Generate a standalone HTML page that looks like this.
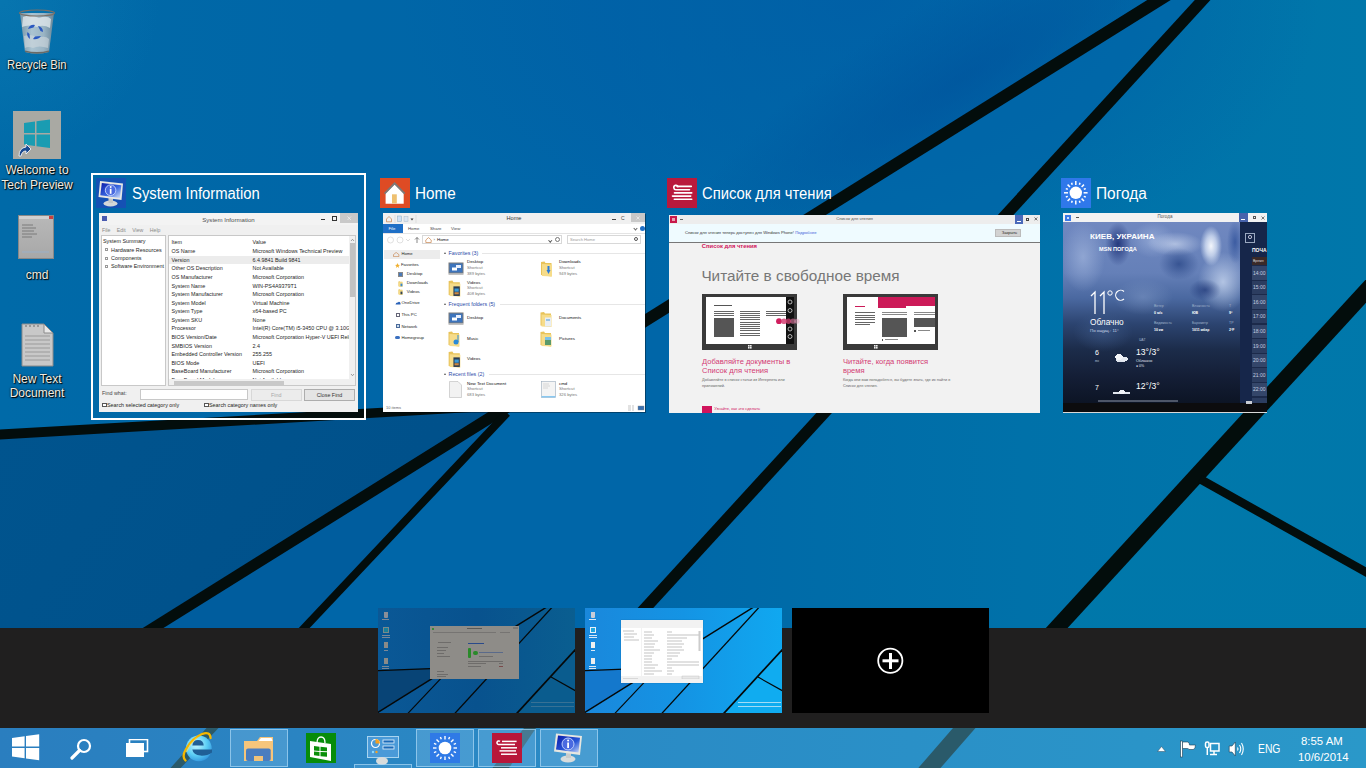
<!DOCTYPE html>
<html><head><meta charset="utf-8">
<style>
*{margin:0;padding:0;box-sizing:border-box}
html,body{width:1366px;height:768px;overflow:hidden;background:#0064a8;font-family:"Liberation Sans",sans-serif}
.abs{position:absolute}
#bg{position:absolute;left:0;top:0}
.ttl{position:absolute;color:#fff;font-size:17px;line-height:20px;white-space:nowrap}
.thumb{position:absolute;background:#fff;overflow:hidden}
#band{position:absolute;left:0;top:628px;width:1366px;height:100px;background:#201f1f}
#taskbar{position:absolute;left:0;top:728px;width:1366px;height:40px;overflow:hidden}
</style></head><body>
<svg id="bg" width="1366" height="768" viewBox="0 0 1366 768">
<defs>
<linearGradient id="g1" x1="0" y1="0" x2="1366" y2="0" gradientUnits="userSpaceOnUse">
<stop offset="0" stop-color="#006aa8"/><stop offset="0.25" stop-color="#0066a7"/><stop offset="0.45" stop-color="#0066a8"/><stop offset="0.6" stop-color="#006ca8"/><stop offset="0.75" stop-color="#0071a9"/><stop offset="1" stop-color="#0077aa"/>
</linearGradient>
<radialGradient id="gtl" cx="0" cy="0" r="160" gradientUnits="userSpaceOnUse"><stop offset="0" stop-color="#1890c0" stop-opacity=".3"/><stop offset="1" stop-color="#1890c0" stop-opacity="0"/></radialGradient>
<linearGradient id="g3" x1="0" y1="430" x2="400" y2="700" gradientUnits="userSpaceOnUse">
<stop offset="0" stop-color="#00548e"/><stop offset="1" stop-color="#00508a"/>
</linearGradient>
<linearGradient id="g6" x1="1200" y1="300" x2="1366" y2="700" gradientUnits="userSpaceOnUse">
<stop offset="0" stop-color="#0078ab"/><stop offset="1" stop-color="#0077a9"/>
</linearGradient>
<clipPath id="cr1"><polygon points="0,0 1160,0 509,405 0,435"/></clipPath><radialGradient id="gdk2"><stop offset="0" stop-color="#005ca6" stop-opacity=".75"/><stop offset=".6" stop-color="#005ca6" stop-opacity=".4"/><stop offset="1" stop-color="#005ca6" stop-opacity="0"/></radialGradient><radialGradient id="gdk"><stop offset="0" stop-color="#00509a" stop-opacity=".6"/><stop offset="1" stop-color="#00509a" stop-opacity="0"/></radialGradient>
</defs>
<rect width="1366" height="768" fill="url(#g1)"/><rect width="400" height="400" fill="url(#gtl)"/><ellipse cx="860" cy="0" rx="460" ry="270" fill="url(#gdk2)"/><g clip-path="url(#cr1)"><ellipse cx="960" cy="80" rx="330" ry="85" fill="url(#gdk)" transform="rotate(-32 960 80)"/></g>
<polygon points="1159,0 1202.6,0 499,768 -71,768" fill="#0066a9" opacity=".6"/>
<!-- R3 below D left of A -->
<polygon points="0,434.5 509,405 -71,768 0,768" fill="url(#g3)"/>
<!-- R4a between A and C -->
<polygon points="505,410 -71,768 173,768" fill="#005d9e"/>
<!-- R6/R7 right of E -->
<polygon points="1374,282 1366,282 1366,768 928,768" fill="url(#g6)"/>
<g fill="#030d0c">
<polygon points="1187.7,-25.3 -109.1,785.5 -103.5,794.5 1194.3,-14.7"/>
<polygon points="1216.7,-23.9 474.4,786.1 482.9,793.9 1225.2,-16.1"/>
<polygon points="504.1,410.3 148.5,787.3 154.3,792.7 509.9,415.7"/>
<polygon points="-9.7,440.1 512.3,409.5 511.7,400.5 -10.3,430.1"/>
<polygon points="1397.7,244.6 902.2,784.6 914.0,795.4 1409.5,255.4"/>
<polygon points="1197.9,482.7 1377.9,583.7 1382.1,576.3 1202.1,475.3"/>
</g>
</svg>


<!-- desktop icons -->
<svg class="abs" style="left:17px;top:8px" width="40" height="48">
<defs><linearGradient id="binb" x1="0" y1="0" x2="1" y2="0"><stop offset="0" stop-color="#8c9ca6"/><stop offset=".35" stop-color="#c8d2d8"/><stop offset=".7" stop-color="#b4c0c8"/><stop offset="1" stop-color="#7a8a94"/></linearGradient></defs>
<path d="M3 5 L37 5 L32 44 Q20 47 8 44 Z" fill="url(#binb)" opacity=".85"/>
<path d="M6 9 Q14 6 22 10 Q30 7 34 11 L33 20 Q26 16 20 19 Q12 16 5 19 Z" fill="#dfe6ea" opacity=".8"/>
<path d="M7 28 Q15 25 21 30 Q28 27 32 31 L31 40 Q22 37 16 40 Q11 38 8 40 Z" fill="#d0d8de" opacity=".6"/>
<ellipse cx="20" cy="5" rx="17.5" ry="3" fill="none" stroke="#7a7068" stroke-width="1.2"/>
<path d="M8 44 Q20 47.5 32 44 L32 42.5 Q20 45.5 8 42.5 Z" fill="#6a6a66"/>
<path d="M11 21 Q13 16 18 17 L16.5 19.5 Z M21 18 Q26 19 26 24 L23.5 23 Z M24 28 Q21 32 16 31 L18 28.5 Z M13 31 Q9 28 10.5 24 L12.5 26 Z" fill="#2a58c0"/>
</svg>
<div class="abs" style="left:7px;top:58px;font-size:12px;line-height:14px;color:#f2ede2;text-shadow:1px 1px 1px #000,0 0 2px #000;white-space:nowrap;transform:scaleX(.94);transform-origin:left">Recycle Bin</div>
<div class="abs" style="left:13px;top:111px;width:48px;height:48px;background:#a9a9a3"></div>
<svg class="abs" style="left:13px;top:111px" width="48" height="48"><g fill="#1a9cb2"><polygon points="11,12 22,10.5 22,22 11,22"/><polygon points="23.5,10.3 37,8.5 37,22 23.5,22"/><polygon points="11,23.5 22,23.5 22,35 11,33.5"/><polygon points="23.5,23.5 37,23.5 37,37 23.5,35.2"/></g><rect x="0" y="34" width="12" height="12" fill="#f0f0f0" opacity=".0"/><path d="M6 45 Q6 37 13 36 L13 33 L18 38 L13 43 L13 40 Q9 40 8 45 Z" fill="#1a4a90" stroke="#fff" stroke-width=".8"/></svg>
<div class="abs" style="left:0;top:163px;width:74px;text-align:center;font-size:12px;line-height:14.5px;color:#f2ede2;text-shadow:1px 1px 1px #000,0 0 2px #000;white-space:nowrap">Welcome to<br>Tech Preview</div>
<div class="abs" style="left:18px;top:215px;width:36px;height:44px;background:linear-gradient(#b8b8b8,#a8a8a8);border:1px solid #888"></div>
<div class="abs" style="left:19px;top:216px;width:34px;height:3px;background:#d0d0d0"></div>
<div class="abs" style="left:49px;top:216px;width:4px;height:3px;background:#c84040"></div>
<svg class="abs" style="left:21px;top:222px" width="30" height="35"><g stroke="#7a7a7a" stroke-width="1"><line x1="1" y1="3" x2="12" y2="3"/><line x1="1" y1="6" x2="15" y2="6"/><line x1="1" y1="9" x2="13" y2="9"/><line x1="1" y1="12" x2="16" y2="12"/><line x1="1" y1="15" x2="11" y2="15"/><line x1="1" y1="30" x2="28" y2="30" stroke="#9ab0c8"/></g></svg>
<div class="abs" style="left:0;top:267.5px;width:74px;text-align:center;font-size:12px;line-height:14px;color:#f2ede2;text-shadow:1px 1px 1px #000,0 0 2px #000">cmd</div>
<svg class="abs" style="left:20px;top:322px" width="35" height="46"><path d="M2 2 L24 2 L33 11 L33 44 L2 44 Z" fill="#c8c8c8" stroke="#8a8a8a" stroke-width="1"/><path d="M24 2 L24 11 L33 11 Z" fill="#e8e8e8" stroke="#8a8a8a" stroke-width="1"/><g stroke="#9a9a9a" stroke-width="1"><line x1="5" y1="14" x2="30" y2="14"/><line x1="5" y1="18" x2="30" y2="18"/><line x1="5" y1="22" x2="30" y2="22"/><line x1="5" y1="26" x2="30" y2="26"/><line x1="5" y1="30" x2="30" y2="30"/><line x1="5" y1="34" x2="30" y2="34"/><line x1="5" y1="38" x2="30" y2="38"/></g><g fill="#8a8a8a"><circle cx="6" cy="4" r="1"/><circle cx="10" cy="4" r="1"/><circle cx="14" cy="4" r="1"/><circle cx="18" cy="4" r="1"/></g></svg>
<div class="abs" style="left:0;top:371.5px;width:74px;text-align:center;font-size:12px;line-height:14.5px;color:#f2ede2;text-shadow:1px 1px 1px #000,0 0 2px #000">New Text<br>Document</div>

<!-- selection frame -->
<div class="abs" style="left:91px;top:173px;width:275px;height:247px;border:2px solid #fff"></div>

<!-- Titles -->
<div class="abs" style="left:96px;top:178px;width:30px;height:30px;background:#1551b4"></div>
<svg class="abs" style="left:96px;top:178px" width="30" height="30">
<defs><linearGradient id="scr2" x1="0" y1="0" x2="1" y2="1"><stop offset="0" stop-color="#0a1aa8"/><stop offset=".55" stop-color="#3a68e0"/><stop offset="1" stop-color="#d8e4fa"/></linearGradient></defs>
<ellipse cx="14.5" cy="25.5" rx="7" ry="3" fill="#d4d8d8"/><rect x="12.5" y="20" width="4.5" height="5" fill="#c4c8c8"/>
<polygon points="4,3 27,5.5 25.5,22 2.5,19" fill="#e8e8e4"/><polygon points="5.8,5 25.3,7.2 24,20 4.3,17.3" fill="url(#scr2)"/>
<circle cx="14.6" cy="12.2" r="5.3" fill="#4a6ae0" stroke="#c8d8ff" stroke-width=".9"/><rect x="13.8" y="10.8" width="1.7" height="5" fill="#fff"/><circle cx="14.7" cy="9" r=".95" fill="#fff"/>
</svg>
<div class="ttl" style="left:131.5px;top:183.5px;font-size:16px;transform:scaleX(.927);transform-origin:left">System Information</div>
<div class="abs" style="left:380px;top:178px;width:30px;height:30px;background:#de4b24"></div>
<svg class="abs" style="left:380px;top:178px" width="30" height="30"><polygon points="5.6,15.3 14.6,6.3 23.7,15.3 23.7,25.7 5.6,25.7" fill="#fff"/><path d="M4.6 15.6 L14.6 5.4 L24.7 15.6" stroke="#7a7a7a" stroke-width="1.8" fill="none"/><rect x="12" y="16.3" width="4.8" height="9.2" fill="#eec070"/></svg>
<div class="ttl" style="left:415px;top:183.5px;font-size:16px;transform:scaleX(.955);transform-origin:left">Home</div>
<div class="abs" style="left:667px;top:178px;width:30px;height:30px;background:#b9193c"></div>
<svg class="abs" style="left:667px;top:178px" width="30" height="30"><g stroke="#fff" stroke-width="1.6" fill="none" stroke-linecap="round"><path d="M11 8.6 A2.2 2.2 0 1 0 9 11.7 L22.5 11.7"/><line x1="10" y1="8.4" x2="24.3" y2="8.4"/><line x1="7.5" y1="14.9" x2="24.7" y2="14.9"/><line x1="5.5" y1="18.1" x2="23.7" y2="18.1"/><line x1="7.3" y1="21.2" x2="24.7" y2="21.2"/></g></svg>
<div class="ttl" style="left:701.7px;top:183.5px;font-size:16px;transform:scaleX(.925);transform-origin:left">Список для чтения</div>
<div class="abs" style="left:1061px;top:178px;width:30px;height:30px;background:#2f78ea"></div>
<svg class="abs" style="left:1061px;top:178px" width="30" height="30"><circle cx="14.8" cy="14.8" r="6.2" fill="#fff"/><g stroke="#fff" stroke-width="1.5"><line x1="14.8" y1="3" x2="14.8" y2="7"/><line x1="14.8" y1="22.6" x2="14.8" y2="26.6"/><line x1="3" y1="14.8" x2="7" y2="14.8"/><line x1="22.6" y1="14.8" x2="26.6" y2="14.8"/><line x1="6.6" y1="6.6" x2="9" y2="9"/><line x1="20.6" y1="20.6" x2="23" y2="23"/><line x1="23" y1="6.6" x2="20.6" y2="9"/><line x1="6.6" y1="23" x2="9" y2="20.6"/><line x1="10.6" y1="4.8" x2="11.2" y2="6.8"/><line x1="19" y1="4.8" x2="18.4" y2="6.8"/><line x1="10.6" y1="24.8" x2="11.2" y2="22.8"/><line x1="19" y1="24.8" x2="18.4" y2="22.8"/><line x1="4.8" y1="10.6" x2="6.8" y2="11.2"/><line x1="4.8" y1="19" x2="6.8" y2="18.4"/><line x1="24.8" y1="10.6" x2="22.8" y2="11.2"/><line x1="24.8" y1="19" x2="22.8" y2="18.4"/></g></svg>
<div class="ttl" style="left:1095.9px;top:183.5px;font-size:16px;transform:scaleX(.964);transform-origin:left">Погода</div>

<!-- thumbnails -->
<div class="thumb" id="t1" style="left:99px;top:213px;width:259px;height:199px;background:#f0f0f0">
<style>#t1 .s{position:absolute;font-size:5.4px;line-height:7px;color:#262626;white-space:nowrap}</style>
<div class="abs" style="left:0;top:0;width:259px;height:12px;background:#f3f3f3"></div>
<div class="abs" style="left:3px;top:3px;width:5px;height:5px;background:#4a5ab0"></div>
<div class="abs" style="left:0;top:2.5px;width:259px;text-align:center;font-size:6.1px;line-height:7px;color:#505050">System Information</div>
<div class="abs" style="left:222px;top:6px;width:4px;height:1.2px;background:#333"></div>
<div class="abs" style="left:233px;top:3px;width:5px;height:4.5px;border:1px solid #333;border-top-width:1.5px"></div>
<div class="abs" style="left:241px;top:0;width:18px;height:10px;background:#c9c9c9"></div>
<svg class="abs" style="left:248px;top:2.5px" width="4.5" height="4.5"><path d="M0.5 0.5 L4.0 4.0 M4.0 0.5 L0.5 4.0" stroke="#f4f4f4" stroke-width="0.7"/></svg>
<div class="abs" style="left:3px;top:14px;font-size:5.2px;line-height:7px;color:#8a8a8a;white-space:nowrap;word-spacing:5px">File Edit View Help</div>
<div class="abs" style="left:1.5px;top:22.4px;width:65.5px;height:151px;background:#fff;border:1px solid #c8c8c8">
<div class="s" style="left:1.5px;top:2px">System Summary</div>
<div class="abs" style="left:3.5px;top:12px;width:3px;height:3px;border:.5px solid #999"></div><div class="s" style="left:9.5px;top:10.2px">Hardware Resources</div>
<div class="abs" style="left:3.5px;top:20.2px;width:3px;height:3px;border:.5px solid #999"></div><div class="s" style="left:9.5px;top:18.4px">Components</div>
<div class="abs" style="left:3.5px;top:28.4px;width:3px;height:3px;border:.5px solid #999"></div><div class="s" style="left:9.5px;top:26.6px">Software Environment</div>
</div>
<div class="abs" style="left:68.5px;top:22.4px;width:188px;height:151px;background:#fff;border:1px solid #c8c8c8;overflow:hidden">
<div class="abs" style="left:0;top:19.5px;width:181px;height:8.5px;background:#ececec"></div>
<div class="s" style="left:3px;top:2.5px">Item</div><div class="s" style="left:84px;top:2.5px">Value</div>
<div class="s" style="left:3px;top:11.9px">OS Name</div><div class="s" style="left:84px;top:11.9px">Microsoft Windows Technical Preview</div>
<div class="s" style="left:3px;top:20.5px">Version</div><div class="s" style="left:84px;top:20.5px">6.4.9841 Build 9841</div>
<div class="s" style="left:3px;top:29.1px">Other OS Description</div><div class="s" style="left:84px;top:29.1px">Not Available</div>
<div class="s" style="left:3px;top:37.6px">OS Manufacturer</div><div class="s" style="left:84px;top:37.6px">Microsoft Corporation</div>
<div class="s" style="left:3px;top:46.2px">System Name</div><div class="s" style="left:84px;top:46.2px">WIN-PS4A9379T1</div>
<div class="s" style="left:3px;top:54.8px">System Manufacturer</div><div class="s" style="left:84px;top:54.8px">Microsoft Corporation</div>
<div class="s" style="left:3px;top:63.4px">System Model</div><div class="s" style="left:84px;top:63.4px">Virtual Machine</div>
<div class="s" style="left:3px;top:72.0px">System Type</div><div class="s" style="left:84px;top:72.0px">x64-based PC</div>
<div class="s" style="left:3px;top:80.5px">System SKU</div><div class="s" style="left:84px;top:80.5px">None</div>
<div class="s" style="left:3px;top:89.1px">Processor</div><div class="s" style="left:84px;top:89.1px">Intel(R) Core(TM) i5-3450 CPU @ 3.10GHz</div>
<div class="s" style="left:3px;top:97.7px">BIOS Version/Date</div><div class="s" style="left:84px;top:97.7px">Microsoft Corporation Hyper-V UEFI Release</div>
<div class="s" style="left:3px;top:106.3px">SMBIOS Version</div><div class="s" style="left:84px;top:106.3px">2.4</div>
<div class="s" style="left:3px;top:114.9px">Embedded Controller Version</div><div class="s" style="left:84px;top:114.9px">255.255</div>
<div class="s" style="left:3px;top:123.4px">BIOS Mode</div><div class="s" style="left:84px;top:123.4px">UEFI</div>
<div class="s" style="left:3px;top:132.0px">BaseBoard Manufacturer</div><div class="s" style="left:84px;top:132.0px">Microsoft Corporation</div>
<div class="s" style="left:3px;top:140.6px">BaseBoard Model</div><div class="s" style="left:84px;top:140.6px">Not Available</div>

<div class="abs" style="left:180.5px;top:0;width:6.5px;height:143px;background:#f0f0f0"></div>
<div class="abs" style="left:181.5px;top:7px;width:4.5px;height:54px;background:#c2c2c2"></div><svg class="abs" style="left:181.5px;top:1.5px" width="5" height="4"><path d="M1 3 L2.5 1.3 L4 3" stroke="#666" stroke-width=".6" fill="none"/></svg><svg class="abs" style="left:181.5px;top:137px" width="5" height="4"><path d="M1 1 L2.5 2.7 L4 1" stroke="#666" stroke-width=".6" fill="none"/></svg>
<div class="abs" style="left:0;top:143px;width:187px;height:7px;background:#f0f0f0"></div>
<div class="abs" style="left:5px;top:144.5px;width:110px;height:4px;background:#c8c8c8"></div>
</div>
<div class="abs" style="left:3px;top:177px;font-size:5.35px;line-height:7px;color:#444;white-space:nowrap">Find what:</div>
<div class="abs" style="left:41px;top:175.5px;width:108px;height:11px;background:#fff;border:1px solid #c8c8c8"></div>
<div class="abs" style="left:152px;top:175.5px;width:50.5px;height:12px;background:#ececec;border:1px solid #d8d8d8;text-align:center;font-size:5.35px;line-height:10px;color:#a8a8a8">Find</div>
<div class="abs" style="left:205px;top:175.5px;width:51px;height:12px;background:#e4e4e4;border:1px solid #adadad;text-align:center;font-size:5.35px;line-height:10px;color:#333">Close Find</div>
<div class="abs" style="left:3px;top:189.5px;width:4.5px;height:4.5px;border:.8px solid #555;background:#fff"></div>
<div class="s" style="left:8px;top:189px">Search selected category only</div>
<div class="abs" style="left:105px;top:189.5px;width:4.5px;height:4.5px;border:.8px solid #555;background:#fff"></div>
<div class="s" style="left:110px;top:189px">Search category names only</div>
</div>
<div class="thumb" id="t2" style="left:383px;top:213px;width:262px;height:199px;box-shadow:1px 1px 0 rgba(0,0,0,.35)"><style>#t2 .e{position:absolute;line-height:6px;white-space:nowrap}</style><div class="abs" style="left:0;top:0;width:262px;height:11px;background:#f0f0f0"></div>
<svg class="abs" style="left:2px;top:2px" width="36" height="8"><path d="M1.5 4 L4 1.5 L6.5 4 L6.5 6.8 L1.5 6.8 Z" fill="none" stroke="#c07030" stroke-width=".6"/><line x1="10" y1="0" x2="10" y2="8" stroke="#ccc" stroke-width=".5"/><rect x="12.5" y="1" width="4" height="5.5" fill="#cfe0f5" stroke="#8ab" stroke-width=".5"/><rect x="19" y="1.5" width="4" height="5" fill="#dde6f0" stroke="#abc" stroke-width=".5"/><path d="M25.5 3.5 L28.5 3.5 L27 5.5 Z" fill="#333"/><line x1="31" y1="0" x2="31" y2="8" stroke="#ccc" stroke-width=".5"/></svg>
<div class="e" style="left:0;top:2.3px;width:262px;text-align:center;font-size:5.6px;color:#333">Home</div>
<div class="abs" style="left:229px;top:5.5px;width:4px;height:1px;background:#444"></div>
<div class="e" style="left:238px;top:2px;font-size:5px;color:#444">C</div>
<div class="abs" style="left:247.5px;top:0;width:14.5px;height:9px;background:#c8c8c8"></div>
<svg class="abs" style="left:253px;top:2.5px" width="4" height="4"><path d="M0.5 0.5 L3.5 3.5 M3.5 0.5 L0.5 3.5" stroke="#f4f4f4" stroke-width="0.7"/></svg>
<div class="abs" style="left:0;top:11px;width:262px;height:9.5px;background:#fff;border-bottom:.5px solid #e4e4e4"></div>
<div class="abs" style="left:0;top:11px;width:20px;height:9px;background:#1e6fc6"></div>
<div class="e" style="left:5.5px;top:12.5px;font-size:4.3px;color:#fff">File</div>
<div class="e" style="left:25px;top:12.8px;font-size:4.3px;color:#444;">Home</div>
<div class="e" style="left:47px;top:12.8px;font-size:4.3px;color:#444;">Share</div>
<div class="e" style="left:68px;top:12.8px;font-size:4.3px;color:#444;">View</div>
<div class="abs" style="left:251px;top:14px;width:3px;height:3px;border-right:.7px solid #666;border-bottom:.7px solid #666;transform:rotate(45deg)"></div>
<div class="abs" style="left:256.5px;top:13px;width:5px;height:5px;border-radius:50%;background:#1e6fc6"></div>
<svg class="abs" style="left:4px;top:23px" width="36" height="8"><circle cx="3.5" cy="4" r="3" fill="none" stroke="#ccc" stroke-width=".6"/><circle cx="13" cy="4" r="3" fill="none" stroke="#ccc" stroke-width=".6"/><path d="M19 3 L21 5 L23 3" stroke="#bbb" stroke-width=".5" fill="none"/><path d="M30 7 L30 1.5 M28 3.5 L30 1.5 L32 3.5" stroke="#555" stroke-width=".7" fill="none"/></svg>
<div class="abs" style="left:39px;top:22px;width:140px;height:9px;border:.6px solid #d8d8d8;background:#fff"></div>
<svg class="abs" style="left:41.5px;top:24px" width="8" height="6"><path d="M0.8 3 L3.5 0.6 L6.2 3 L6.2 5.5 L0.8 5.5 Z" fill="none" stroke="#c07030" stroke-width=".6"/></svg>
<div class="e" style="left:50.5px;top:23.6px;font-size:4.3px;color:#555;">›</div>
<div class="e" style="left:54px;top:23.6px;font-size:4.4px;color:#111;">Home</div>
<div class="abs" style="left:166px;top:25.5px;width:2.5px;height:2.5px;border-right:.6px solid #555;border-bottom:.6px solid #555;transform:rotate(45deg)"></div>
<div class="abs" style="left:172px;top:24px;width:5px;height:5px;border:.6px solid #777;border-radius:50%"></div>
<div class="abs" style="left:184px;top:22px;width:74px;height:9px;border:.6px solid #d8d8d8;background:#fff"></div>
<div class="e" style="left:187px;top:23.6px;font-size:4.1px;color:#9a9a9a;">Search Home</div>
<div class="abs" style="left:251px;top:24px;width:4px;height:4px;border:.6px solid #555;border-radius:50%"></div>
<div class="abs" style="left:1px;top:36.5px;width:56px;height:9.5px;background:#ececec"></div>
<svg class="abs" style="left:10px;top:38.5px" width="7" height="5"><path d="M0.5 2.6 L3.2 0.4 L5.9 2.6 L5.9 4.6 L0.5 4.6 Z" fill="none" stroke="#c07030" stroke-width=".55"/></svg>
<div class="e" style="left:18.5px;top:38.3px;font-size:4.2px;color:#222;">Home</div>
<svg class="abs" style="left:11.5px;top:50px" width="5" height="5"><polygon points="2.5,0 3.2,1.8 5,1.9 3.6,3 4.1,4.9 2.5,3.8 0.9,4.9 1.4,3 0,1.9 1.8,1.8" fill="#f0b030"/></svg>
<div class="e" style="left:18px;top:49.4px;font-size:4.3px;color:#1a1a1a;">Favorites</div>
<div class="abs" style="left:15px;top:59px;width:5px;height:4.5px;background:#4a7ab8;border:.5px solid #888"></div>
<div class="e" style="left:23.7px;top:58.2px;font-size:4.3px;color:#1a1a1a;">Desktop</div>
<svg class="abs" style="left:15px;top:67.5px" width="5" height="6" viewBox="0 0 12 16"><path d="M0.5 1 L4 0.5 L5 2 L11 2 L11 15.5 L0.5 14 Z" fill="#e8c35a"/><path d="M1.5 3 L11.5 3.5 L11.5 15.5 L1.5 15 Z" fill="#f6dc8a"/><rect x="6" y="7" width="5" height="7" fill="#3a8ad0"/></svg>
<div class="e" style="left:23.7px;top:67.0px;font-size:4.3px;color:#1a1a1a;">Downloads</div>
<svg class="abs" style="left:15px;top:76.3px" width="5" height="6" viewBox="0 0 12 16"><path d="M0.5 1 L4 0.5 L5 2 L11 2 L11 15.5 L0.5 14 Z" fill="#e8c35a"/><path d="M1.5 3 L11.5 3.5 L11.5 15.5 L1.5 15 Z" fill="#f6dc8a"/><rect x="6" y="7" width="5" height="7" fill="#345"/></svg>
<div class="e" style="left:23.7px;top:75.8px;font-size:4.3px;color:#1a1a1a;">Videos</div>
<svg class="abs" style="left:12px;top:88px" width="6" height="4"><path d="M0.5 3.5 Q1 1 3 1.5 Q4 0 5.5 2 L5.5 3.5 Z" fill="#2a62b8"/></svg>
<div class="e" style="left:18.5px;top:87.2px;font-size:4.3px;color:#1a1a1a;">OneDrive</div>
<div class="abs" style="left:12.5px;top:99.5px;width:4.5px;height:4px;border:.5px solid #667"></div>
<div class="e" style="left:18.5px;top:99.2px;font-size:4.3px;color:#1a1a1a;">This PC</div>
<div class="abs" style="left:12.5px;top:111px;width:4.5px;height:4px;border:.5px solid #4a6a9a;background:#cde"></div>
<div class="e" style="left:18.5px;top:110.6px;font-size:4.3px;color:#1a1a1a;">Network</div>
<div class="abs" style="left:12px;top:123px;width:5px;height:3px;border-radius:1.5px;background:#3a70c0"></div>
<div class="e" style="left:18.5px;top:122.3px;font-size:4.3px;color:#1a1a1a;">Homegroup</div>
<div class="abs" style="left:61px;top:39.0px;width:0;height:0;border-left:1.2px solid transparent;border-right:1.2px solid transparent;border-bottom:2px solid #555"></div><div class="e" style="left:65.6px;top:37.0px;font-size:5.3px;color:#2a4aa8;">Favorites (3)</div><div class="abs" style="left:98.8px;top:40.0px;width:162.8px;height:.6px;background:#e6e6e6"></div>
<svg class="abs" style="left:65px;top:48.5px" width="16" height="13"><rect x="0.5" y="0.5" width="15" height="11" fill="#7a7a7a"/><rect x="1.5" y="1.5" width="13" height="9" fill="#3d74bc"/><rect x="4" y="5.5" width="5" height="3" fill="#fff"/><rect x="8" y="3" width="5" height="3" fill="#e8f0ff"/><rect x="0.5" y="11.5" width="15" height="1.2" fill="#aaa"/></svg>
<div class="e" style="left:84px;top:46.3px;font-size:4.4px;color:#111;">Desktop</div>
<div class="e" style="left:84px;top:52.0px;font-size:4.2px;color:#777;">Shortcut</div>
<div class="e" style="left:84px;top:57.8px;font-size:4.2px;color:#777;">389 bytes</div>
<svg class="abs" style="left:157px;top:48px" width="13" height="16" viewBox="0 0 12 16"><path d="M0.5 1 L4 0.5 L5 2 L11 2 L11 15.5 L0.5 14 Z" fill="#e8c35a"/><path d="M1.5 3 L11.5 3.5 L11.5 15.5 L1.5 15 Z" fill="#f6dc8a"/><path d="M6 9 L10 9 L8 13 Z" fill="#2a7ad8"/><rect x="7" y="5" width="2" height="5" fill="#2a7ad8"/></svg>
<div class="e" style="left:176px;top:46.3px;font-size:4.4px;color:#111;">Downloads</div>
<div class="e" style="left:176px;top:52.0px;font-size:4.2px;color:#777;">Shortcut</div>
<div class="e" style="left:176px;top:57.8px;font-size:4.2px;color:#777;">949 bytes</div>
<svg class="abs" style="left:65px;top:67px" width="13" height="17" viewBox="0 0 12 16"><path d="M0.5 1 L4 0.5 L5 2 L11 2 L11 15.5 L0.5 14 Z" fill="#e8c35a"/><path d="M1.5 3 L11.5 3.5 L11.5 15.5 L1.5 15 Z" fill="#f6dc8a"/><rect x="5" y="6" width="6" height="9" fill="#2c3c50"/><rect x="6" y="8" width="4" height="3" fill="#3a9ad8"/><rect x="6" y="11.5" width="4" height="2" fill="#c84"/></svg>
<div class="e" style="left:84px;top:66.7px;font-size:4.4px;color:#111;">Videos</div>
<div class="e" style="left:84px;top:72.4px;font-size:4.2px;color:#777;">Shortcut</div>
<div class="e" style="left:84px;top:78.0px;font-size:4.2px;color:#777;">408 bytes</div>
<div class="abs" style="left:61px;top:89.6px;width:0;height:0;border-left:1.2px solid transparent;border-right:1.2px solid transparent;border-bottom:2px solid #555"></div><div class="e" style="left:65.6px;top:87.6px;font-size:5.3px;color:#2a4aa8;">Frequent folders (5)</div><div class="abs" style="left:116.6px;top:90.6px;width:145.0px;height:.6px;background:#e6e6e6"></div>
<svg class="abs" style="left:65px;top:99px" width="16" height="13"><rect x="0.5" y="0.5" width="15" height="11" fill="#7a7a7a"/><rect x="1.5" y="1.5" width="13" height="9" fill="#3d74bc"/><rect x="4" y="5.5" width="5" height="3" fill="#fff"/><rect x="8" y="3" width="5" height="3" fill="#e8f0ff"/><rect x="0.5" y="11.5" width="15" height="1.2" fill="#aaa"/></svg>
<div class="e" style="left:84px;top:102.4px;font-size:4.4px;color:#111;">Desktop</div>
<svg class="abs" style="left:157px;top:97.5px" width="12" height="17" viewBox="0 0 12 16"><path d="M0.5 1 L4 0.5 L5 2 L11 2 L11 15.5 L0.5 14 Z" fill="#e8c35a"/><path d="M1.5 3 L11.5 3.5 L11.5 15.5 L1.5 15 Z" fill="#f6dc8a"/><rect x="5" y="6" width="6" height="9" fill="#e8eef4"/><rect x="6" y="8" width="4" height="1" fill="#4a9ad8"/></svg>
<div class="e" style="left:176px;top:102.4px;font-size:4.4px;color:#111;">Documents</div>
<svg class="abs" style="left:65px;top:118px" width="12" height="16" viewBox="0 0 12 16"><path d="M0.5 1 L4 0.5 L5 2 L11 2 L11 15.5 L0.5 14 Z" fill="#e8c35a"/><path d="M1.5 3 L11.5 3.5 L11.5 15.5 L1.5 15 Z" fill="#f6dc8a"/><circle cx="8" cy="11" r="2.5" fill="#2a8ad8"/><rect x="9.5" y="4" width="1" height="7" fill="#2a8ad8"/></svg>
<div class="e" style="left:84px;top:122.8px;font-size:4.4px;color:#111;">Music</div>
<svg class="abs" style="left:157px;top:118px" width="12" height="16" viewBox="0 0 12 16"><path d="M0.5 1 L4 0.5 L5 2 L11 2 L11 15.5 L0.5 14 Z" fill="#e8c35a"/><path d="M1.5 3 L11.5 3.5 L11.5 15.5 L1.5 15 Z" fill="#f6dc8a"/><rect x="5" y="6" width="6" height="8" fill="#5a9a6a"/><rect x="5" y="6" width="6" height="3" fill="#7ac0e8"/></svg>
<div class="e" style="left:176px;top:122.8px;font-size:4.4px;color:#111;">Pictures</div>
<svg class="abs" style="left:65px;top:138px" width="13" height="17" viewBox="0 0 12 16"><path d="M0.5 1 L4 0.5 L5 2 L11 2 L11 15.5 L0.5 14 Z" fill="#e8c35a"/><path d="M1.5 3 L11.5 3.5 L11.5 15.5 L1.5 15 Z" fill="#f6dc8a"/><rect x="5" y="6" width="6" height="9" fill="#2c3c50"/><rect x="6" y="8" width="4" height="3" fill="#3a9ad8"/><rect x="6" y="11.5" width="4" height="2" fill="#c84"/></svg>
<div class="e" style="left:84px;top:143.0px;font-size:4.4px;color:#111;">Videos</div>
<div class="abs" style="left:61px;top:160.4px;width:0;height:0;border-left:1.2px solid transparent;border-right:1.2px solid transparent;border-bottom:2px solid #555"></div><div class="e" style="left:65.6px;top:158.4px;font-size:5.3px;color:#2a4aa8;">Recent files (2)</div><div class="abs" style="left:106.4px;top:161.4px;width:155.2px;height:.6px;background:#e6e6e6"></div>
<svg class="abs" style="left:66px;top:168px" width="13" height="17"><path d="M0.5 0.5 L9 0.5 L12.5 4 L12.5 16.5 L0.5 16.5 Z" fill="#f2f2f2" stroke="#bbb" stroke-width=".6"/></svg>
<div class="e" style="left:84px;top:167.6px;font-size:4.4px;color:#111;">New Text Document</div>
<div class="e" style="left:84px;top:173.2px;font-size:4.2px;color:#777;">Shortcut</div>
<div class="e" style="left:84px;top:179.0px;font-size:4.2px;color:#777;">683 bytes</div>
<svg class="abs" style="left:157.5px;top:167.5px" width="15" height="17"><rect x="0.5" y="0.5" width="14" height="16" fill="#f4f4f4" stroke="#9ab" stroke-width=".6"/><rect x="0.5" y="15" width="14" height="1.5" fill="#8ac8f0"/><g stroke="#bbb" stroke-width=".5"><line x1="2" y1="3" x2="8" y2="3"/><line x1="2" y1="5" x2="9" y2="5"/><line x1="2" y1="7" x2="7" y2="7"/></g></svg>
<div class="e" style="left:176px;top:167.6px;font-size:4.4px;color:#111;">cmd</div>
<div class="e" style="left:176px;top:173.2px;font-size:4.2px;color:#777;">Shortcut</div>
<div class="e" style="left:176px;top:179.0px;font-size:4.2px;color:#777;">326 bytes</div>
<div class="e" style="left:3px;top:191.7px;font-size:4px;color:#666;">10 items</div>
<svg class="abs" style="left:244px;top:192px" width="18" height="6"><g stroke="#888" stroke-width=".5"><line x1="1" y1="1" x2="4" y2="1"/><line x1="1" y1="3" x2="4" y2="3"/><line x1="1" y1="5" x2="4" y2="5"/><line x1="6" y1="0" x2="6" y2="6"/></g><rect x="11" y="1" width="6" height="4" fill="#3a70b0" stroke="#888" stroke-width=".4"/></svg></div>
<div class="thumb" id="t3" style="left:669px;top:215px;width:371px;height:198px;background:#f2f2f2"><style>#t3 .e{position:absolute;white-space:nowrap}</style><div class="abs" style="left:0px;top:0px;width:371.0px;height:8.5px;background:#ededed;"></div>
<div class="abs" style="left:1px;top:1.3px;width:6.5px;height:6.3px;background:#c8174a;"></div>
<div class="abs" style="left:2.5px;top:3px;width:3.5px;height:3.0px;background:#e8a0b0;"></div>
<div class="abs" style="left:11px;top:4px;width:3.0px;height:0.6px;background:#666;"></div>
<div class="e" style="left:0;top:1.3px;width:371px;text-align:center;font-size:4.2px;line-height:6px;color:#555">Список для чтения</div>
<div class="abs" style="left:345.8px;top:0px;width:8.2px;height:8.5px;background:#4a6aba;"></div>
<div class="abs" style="left:348px;top:5.5px;width:4.0px;height:0.7px;background:#fff;"></div>
<div class="abs" style="left:356.5px;top:2.5px;width:3.5px;height:3.5px;background:transparent;border:.7px solid #444"></div>
<svg class="abs" style="left:365px;top:2.3px" width="3.8" height="3.8"><path d="M0.5 0.5 L3.3 3.3 M3.3 0.5 L0.5 3.3" stroke="#333" stroke-width="0.7"/></svg>
<div class="abs" style="left:0px;top:8.5px;width:371.0px;height:0.5px;background:#a8c8e8;"></div>
<div class="abs" style="left:0px;top:9px;width:371.0px;height:17.7px;background:#effbff;"></div>
<div class="e" style="left:16px;top:14.8px;font-size:4.12px;color:#333;line-height:6px">Список для чтения теперь доступен для Windows Phone! <span style="color:#3a5ad8">Подробнее</span></div>
<div class="abs" style="left:326.3px;top:13.6px;width:26.0px;height:8.1px;background:#d2d2d2;border:.5px solid #bbb"></div>
<div class="e" style="left:328.5px;top:14.8px;font-size:4px;color:#222;line-height:6px;width:24px;text-align:center">Закрыть</div>
<div class="abs" style="left:0px;top:26.7px;width:371.0px;height:1.1px;background:#777;"></div>
<div class="e" style="left:32.8px;top:27.5px;font-size:5.85px;color:#d0145c;font-weight:bold;line-height:7px">Список для чтения</div>
<div class="e" style="left:32.4px;top:52px;font-size:15.3px;color:#777;line-height:18px">Читайте в свободное время</div>
<div class="abs" style="left:33px;top:78.8px;width:95.1px;height:56.2px;background:#3a3a3a;"></div>
<div class="abs" style="left:36.6px;top:82.4px;width:80.0px;height:46.2px;background:#fff;"></div>
<div class="abs" style="left:116.6px;top:82.4px;width:8.2px;height:46.2px;background:#111;"></div>
<svg class="abs" style="left:117px;top:82px" width="8" height="44"><g stroke="#ddd" stroke-width=".8" fill="none"><circle cx="4" cy="5" r="2"/><circle cx="4" cy="13.5" r="2"/><circle cx="4" cy="32" r="2"/><circle cx="4" cy="39.5" r="2"/></g></svg>
<div class="abs" style="left:45.2px;top:90px;width:17.4px;height:1.0px;background:#555;"></div>
<div class="abs" style="left:45.2px;top:95.5px;width:19.8px;height:1.0px;background:#666;"></div>
<div class="abs" style="left:45.2px;top:97.5px;width:19.8px;height:1.0px;background:#666;"></div>
<div class="abs" style="left:45.2px;top:99.5px;width:19.8px;height:1.0px;background:#666;"></div>
<div class="abs" style="left:45.2px;top:102.6px;width:19.8px;height:19.2px;background:#555;"></div>
<div class="abs" style="left:70.8px;top:95.5px;width:20.2px;height:1.0px;background:#666;"></div>
<div class="abs" style="left:70.8px;top:97.7px;width:20.2px;height:1.0px;background:#666;"></div>
<div class="abs" style="left:70.8px;top:99.9px;width:20.2px;height:1.0px;background:#666;"></div>
<div class="abs" style="left:70.8px;top:102.1px;width:20.2px;height:1.0px;background:#666;"></div>
<div class="abs" style="left:70.8px;top:104.3px;width:20.2px;height:1.0px;background:#666;"></div>
<div class="abs" style="left:70.8px;top:106.5px;width:20.2px;height:1.0px;background:#666;"></div>
<div class="abs" style="left:70.8px;top:108.7px;width:20.2px;height:1.0px;background:#666;"></div>
<div class="abs" style="left:70.8px;top:110.9px;width:20.2px;height:1.0px;background:#666;"></div>
<div class="abs" style="left:70.8px;top:113.1px;width:20.2px;height:1.0px;background:#666;"></div>
<div class="abs" style="left:70.8px;top:115.3px;width:20.2px;height:1.0px;background:#666;"></div>
<div class="abs" style="left:70.8px;top:117.5px;width:20.2px;height:1.0px;background:#666;"></div>
<div class="abs" style="left:70.8px;top:119.7px;width:20.2px;height:1.0px;background:#666;"></div>
<div class="abs" style="left:96.5px;top:95.5px;width:20.1px;height:1.0px;background:#666;"></div>
<div class="abs" style="left:96.5px;top:97.5px;width:20.1px;height:1.0px;background:#666;"></div>
<div class="abs" style="left:96.5px;top:99.5px;width:20.1px;height:1.0px;background:#666;"></div>
<svg class="abs" style="left:107px;top:102.5px" width="24" height="7"><circle cx="3" cy="3.2" r="2.9" fill="#d01e5e"/><circle cx="8" cy="3.2" r="2.8" fill="#d84a7c" opacity=".9"/><circle cx="12.5" cy="3.2" r="2.7" fill="#c83a6a" opacity=".8"/><circle cx="17" cy="3.2" r="2.6" fill="#e07aa0" opacity=".6"/><circle cx="21" cy="3.2" r="2.5" fill="#e8a0c0" opacity=".5"/></svg>
<svg class="abs" style="left:79px;top:129.5px" width="4" height="4"><g fill="#eee"><rect x="0" y="0" width="1.6" height="1.6"/><rect x="2" y="0" width="1.6" height="1.6"/><rect x="0" y="2" width="1.6" height="1.6"/><rect x="2" y="2" width="1.6" height="1.6"/></g></svg>
<div class="abs" style="left:173.9px;top:78.8px;width:95.5px;height:56.2px;background:#3a3a3a;"></div>
<div class="abs" style="left:177.5px;top:82.4px;width:88.3px;height:46.2px;background:#fff;"></div>
<div class="abs" style="left:209px;top:82.4px;width:56.8px;height:10.5px;background:#cc1a58;"></div>
<div class="abs" style="left:237px;top:91px;width:28.8px;height:2.0px;background:#fff;"></div>
<div class="abs" style="left:185.6px;top:90.7px;width:10.6px;height:1.2px;background:#cc1a58;"></div>
<div class="abs" style="left:185.6px;top:97.3px;width:20.7px;height:1.1px;background:#666;"></div>
<div class="abs" style="left:185.6px;top:99.6px;width:20.7px;height:1.1px;background:#666;"></div>
<div class="abs" style="left:185.6px;top:101.9px;width:20.7px;height:1.1px;background:#666;"></div>
<div class="abs" style="left:185.6px;top:104.2px;width:20.7px;height:1.1px;background:#666;"></div>
<div class="abs" style="left:185.6px;top:106.5px;width:20.7px;height:1.1px;background:#666;"></div>
<div class="abs" style="left:185.6px;top:108.8px;width:15.4px;height:1.1px;background:#666;"></div>
<div class="abs" style="left:212.7px;top:97.3px;width:25.6px;height:1.1px;background:#888;"></div>
<div class="abs" style="left:212.7px;top:99.3px;width:25.6px;height:1.1px;background:#888;"></div>
<div class="abs" style="left:212.7px;top:102.6px;width:25.6px;height:19.6px;background:#555;"></div>
<div class="abs" style="left:212.7px;top:124px;width:1.8px;height:1.8px;background:#555;"></div>
<div class="abs" style="left:216px;top:124.3px;width:13.0px;height:1.0px;background:#888;"></div>
<div class="abs" style="left:245px;top:97.3px;width:20.8px;height:1.1px;background:#888;"></div>
<div class="abs" style="left:245px;top:99.3px;width:20.8px;height:1.1px;background:#888;"></div>
<div class="abs" style="left:245px;top:102.6px;width:20.8px;height:9.9px;background:#555;"></div>
<div class="abs" style="left:245px;top:114.5px;width:2.0px;height:2.0px;background:#555;"></div>
<div class="abs" style="left:248.5px;top:115px;width:12.5px;height:1.0px;background:#888;"></div>
<svg class="abs" style="left:205px;top:129.5px" width="4" height="4"><g fill="#eee"><rect x="0" y="0" width="1.6" height="1.6"/><rect x="2" y="0" width="1.6" height="1.6"/><rect x="0" y="2" width="1.6" height="1.6"/><rect x="2" y="2" width="1.6" height="1.6"/></g></svg>
<div class="e" style="left:33px;top:141.8px;font-size:7.55px;color:#d23c74;line-height:9px">Добавляйте документы в<br>Список для чтения</div>
<div class="e" style="left:173.9px;top:141.8px;font-size:7.55px;color:#d23c74;line-height:9px">Читайте, когда появится<br>время</div>
<div class="e" style="left:33px;top:163px;font-size:3.85px;color:#666;line-height:5.5px">Добавляйте в список статьи из Интернета или<br>приложений.</div>
<div class="e" style="left:173.9px;top:163px;font-size:3.85px;color:#666;line-height:5.5px">Когда они вам понадобятся, вы будете знать, где их найти в<br>Список для чтения.</div>
<div class="abs" style="left:33px;top:190.8px;width:9.5px;height:7.2px;background:#d0145c;"></div>
<div class="e" style="left:45.2px;top:191.2px;font-size:4px;color:#d0145c;line-height:6px">Узнайте, как это сделать</div></div>
<div class="thumb" id="t4" style="left:1063px;top:213px;width:204px;height:199px;background:#1b2a47">
<div class="abs" style="left:0;top:9px;width:177px;height:182px;background:
radial-gradient(ellipse 11px 20px at 148px 24px,rgba(250,252,255,.95),rgba(225,235,250,.7) 50%,rgba(200,215,240,0) 100%),
radial-gradient(ellipse 13px 22px at 55px 22px,rgba(25,45,115,.85),rgba(25,45,115,.4) 55%,rgba(25,45,115,0) 100%),
radial-gradient(ellipse 20px 16px at 116px 42px,rgba(35,65,130,.7),rgba(35,65,130,0) 100%),
radial-gradient(ellipse 8px 22px at 172px 20px,rgba(40,75,150,.7),rgba(40,75,150,0) 100%),
radial-gradient(ellipse 22px 35px at 20px 35px,rgba(160,180,220,.7),rgba(160,180,220,0) 100%),
radial-gradient(ellipse 16px 11px at 142px 68px,rgba(30,55,120,.75),rgba(30,55,120,0) 100%),radial-gradient(ellipse 25px 30px at 160px 60px,rgba(200,215,240,.8),rgba(175,195,230,0) 100%),radial-gradient(ellipse 28px 12px at 112px 22px,rgba(220,230,248,.6),rgba(220,230,248,0) 100%),
radial-gradient(ellipse 22px 18px at 90px 18px,rgba(165,185,225,.6),rgba(165,185,225,0) 100%),
radial-gradient(ellipse 30px 18px at 80px 75px,rgba(130,155,200,.5),rgba(130,155,200,0) 100%),
radial-gradient(ellipse 30px 20px at 40px 110px,rgba(70,100,150,.5),rgba(70,100,150,0) 100%),
linear-gradient(180deg,#7088c0 0%,#6580b8 28%,#4a68a0 42%,#2c4470 56%,#1c2c4a 70%,#141e36 85%,#0c1424 100%)"></div>
<div class="abs" style="left:0;top:0;width:204px;height:9px;background:#f2f2f2"></div>
<div class="abs" style="left:2px;top:2px;width:6px;height:6px;background:#3b78e7"></div>
<div class="abs" style="left:4px;top:4px;width:2px;height:2px;background:#fff;border-radius:1px"></div>
<div class="abs" style="left:13px;top:4px;width:3px;height:1px;background:#555"></div>
<div class="abs" style="left:0;top:1px;width:204px;text-align:center;font-size:4.5px;color:#555;line-height:6px">Погода</div>
<div class="abs" style="left:176px;top:0;width:9px;height:9px;background:#4763ac"></div>
<div class="abs" style="left:178px;top:6px;width:4px;height:1px;background:#fff"></div>
<div class="abs" style="left:190px;top:3px;width:3px;height:3px;border:1px solid #555"></div>
<svg class="abs" style="left:198px;top:2.5px" width="4" height="4"><path d="M0.5 0.5 L3.5 3.5 M3.5 0.5 L0.5 3.5" stroke="#444" stroke-width="0.7"/></svg>
<div class="abs" style="left:177px;top:9px;width:27px;height:182px;background:#16264a"></div>
<div class="abs" style="left:189px;top:44px;width:15px;height:146px;background:#2c3d60"></div>
<div class="abs" style="left:189px;top:44px;width:15px;height:8px;background:#3a2a28"></div><div class="abs" style="left:190px;top:45.5px;font-size:3.5px;line-height:5px;color:#ddd">Время</div>
<div class="abs" style="left:181.5px;top:19.5px;width:10px;height:10px;border:.8px solid #9aa8c0"></div><div class="abs" style="left:185px;top:22px;width:3.5px;height:3.5px;border:.7px solid #dde;border-radius:50%"></div>
<div class="abs" style="left:189px;top:34px;font-size:5px;font-weight:bold;color:#fff;line-height:6px">ПОЧА</div>
<div class="abs" style="left:189px;top:52.0px;width:15px;height:14.6px;background:#34466a"></div><div class="abs" style="left:189px;top:81.2px;width:15px;height:14.6px;background:#34466a"></div><div class="abs" style="left:189px;top:110.4px;width:15px;height:14.6px;background:#34466a"></div><div class="abs" style="left:189px;top:139.6px;width:15px;height:14.6px;background:#34466a"></div><div class="abs" style="left:189px;top:168.8px;width:15px;height:14.6px;background:#34466a"></div><div class="abs" style="left:189px;top:52.0px;width:15px;height:1.2px;background:#1c2a4a"></div><div class="abs" style="left:189px;top:66.6px;width:15px;height:1.2px;background:#1c2a4a"></div><div class="abs" style="left:189px;top:81.2px;width:15px;height:1.2px;background:#1c2a4a"></div><div class="abs" style="left:189px;top:95.8px;width:15px;height:1.2px;background:#1c2a4a"></div><div class="abs" style="left:189px;top:110.4px;width:15px;height:1.2px;background:#1c2a4a"></div><div class="abs" style="left:189px;top:125.0px;width:15px;height:1.2px;background:#1c2a4a"></div><div class="abs" style="left:189px;top:139.6px;width:15px;height:1.2px;background:#1c2a4a"></div><div class="abs" style="left:189px;top:154.2px;width:15px;height:1.2px;background:#1c2a4a"></div><div class="abs" style="left:189px;top:168.8px;width:15px;height:1.2px;background:#1c2a4a"></div><div class="abs" style="left:189px;top:183.4px;width:15px;height:1.2px;background:#1c2a4a"></div><div class="abs" style="left:190px;top:52.6px;font-size:5px;color:#c4cee0;line-height:14.6px;white-space:nowrap">14:00<br>15:00<br>16:00<br>17:00<br>18:00<br>19:00<br>20:00<br>21:00<br>22:00</div>
<div class="abs" style="left:27px;top:19px;font-size:8.1px;font-weight:bold;color:#fff;line-height:10px;white-space:nowrap">КИЕВ, УКРАИНА</div>
<div class="abs" style="left:36px;top:33px;font-size:5.6px;font-weight:bold;color:#fff;line-height:7px;white-space:nowrap">MSN ПОГОДА</div>
<svg class="abs" style="left:26px;top:75px" width="45" height="28"><path d="M2 8 L6 4 L6 26 M11 8 L15 4 L15 26" stroke="#fff" stroke-width="1.3" fill="none"/><circle cx="21" cy="5" r="2.2" stroke="#fff" stroke-width="1" fill="none"/><path d="M35 3.5 A5 5 0 1 0 35 11" stroke="#fff" stroke-width="1.2" fill="none"/></svg>
<div class="abs" style="left:27px;top:104px;font-size:8.3px;color:#fff;line-height:10px;white-space:nowrap">Облачно</div>
<div class="abs" style="left:27px;top:115px;font-size:4.4px;color:#c8d4e8;line-height:6px;white-space:nowrap">По ощущ.: 11°</div>
<div class="abs" style="left:91px;top:89.5px;font-size:3.5px;color:#9fb0c8;line-height:7px;white-space:nowrap">Ветер<br><b style="color:#fff">0 м/с</b></div>
<div class="abs" style="left:91px;top:107px;font-size:3.5px;color:#9fb0c8;line-height:7px;white-space:nowrap">Видимость<br><b style="color:#fff">10 км</b></div>
<div class="abs" style="left:129px;top:89.5px;font-size:3.5px;color:#9fb0c8;line-height:7px;white-space:nowrap">Влажность<br><b style="color:#fff">ЮВ</b></div>
<div class="abs" style="left:129px;top:107px;font-size:3.5px;color:#9fb0c8;line-height:7px;white-space:nowrap">Барометр<br><b style="color:#fff">1011 мбар</b></div>
<div class="abs" style="left:166px;top:89.5px;font-size:3.5px;color:#9fb0c8;line-height:7px;white-space:nowrap">Т<br><b style="color:#fff">9°</b></div>
<div class="abs" style="left:166px;top:107px;font-size:3.5px;color:#9fb0c8;line-height:7px;white-space:nowrap">ТР<br><b style="color:#fff">2°F</b></div>
<div class="abs" style="left:76px;top:125px;font-size:3.5px;color:#9fb0c8;line-height:5px">ЧАТ</div>
<div class="abs" style="left:32px;top:136px;font-size:7px;color:#fff;line-height:8px">6</div>
<div class="abs" style="left:32px;top:146px;font-size:3.5px;color:#c8d4e8;line-height:5px">пн</div>
<div class="abs" style="left:49px;top:139px;width:18px;height:12px;background:radial-gradient(ellipse 6px 5px at 7px 5px,#f4f6fa 60%,transparent 62%),radial-gradient(ellipse 6px 4px at 12px 7px,#e6ebf2 60%,transparent 62%),radial-gradient(ellipse 8px 4px at 9px 8px,#dfe5ee 60%,transparent 62%)"></div>
<div class="abs" style="left:73px;top:134px;font-size:8.6px;color:#fff;line-height:10px;white-space:nowrap">13°/3°</div>
<div class="abs" style="left:73px;top:145px;font-size:4px;color:#e0e8f4;line-height:5px;white-space:nowrap">Облачно</div>
<div class="abs" style="left:73px;top:151px;font-size:3.5px;color:#e0e8f4;line-height:5px;white-space:nowrap">● 0%</div>
<div class="abs" style="left:32px;top:171px;font-size:7px;color:#fff;line-height:8px">7</div>
<div class="abs" style="left:50px;top:174px;width:17px;height:7px;background:radial-gradient(ellipse 5px 4px at 9px 5px,#f0f3f8 60%,transparent 62%),linear-gradient(#dfe5ee,#dfe5ee) 0 5px/17px 2px no-repeat"></div>
<div class="abs" style="left:73px;top:168px;font-size:8.6px;color:#fff;line-height:10px;white-space:nowrap">12°/3°</div>
<div class="abs" style="left:35px;top:187px;width:80px;height:2px;background:rgba(200,210,230,.35)"></div>
<div class="abs" style="left:0;top:190px;width:204px;height:9px;background:#0c0c0e"></div>
<div class="abs" style="left:183px;top:188px;width:6px;height:3px;background:#c8ccd4"></div>
</div>
<div class="abs" style="left:1063px;top:412px;width:204px;height:1px;background:#d8d8d8"></div>

<div id="band"></div>
<div class="abs" id="d1" style="left:378px;top:608px;width:197px;height:105px;overflow:hidden"><svg class="abs" style="left:0;top:0" width="197" height="105" viewBox="0 0 1366 728" preserveAspectRatio="none">
<defs><linearGradient id="m1g" x1="0" y1="0" x2="1366" y2="0" gradientUnits="userSpaceOnUse"><stop offset="0" stop-color="#0a5896"/><stop offset=".5" stop-color="#08528e"/><stop offset="1" stop-color="#0a5e90"/></linearGradient></defs>
<rect width="1366" height="768" fill="url(#m1g)"/>
<polygon points="0,434.5 500,415 -71,768 0,768" fill="#084476"/>
<polygon points="1374,282 1366,282 1366,768 928,768" fill="#0a5c8e"/>
<g fill="#060808"><polygon points="1188.4,-24.2 -108.9,785.8 -103.6,794.2 1193.7,-15.8"/><polygon points="1217.6,-23.0 475.4,787.0 482.1,793.0 1224.3,-17.0"/><polygon points="504.1,410.3 148.5,787.3 154.3,792.7 509.9,415.7"/><polygon points="-9.8,438.9 505.2,419.3 504.8,411.3 -10.2,430.9"/><polygon points="1399.2,245.9 903.7,785.9 912.5,794.1 1408.0,254.1"/><polygon points="1198.0,482.5 1378.0,583.5 1382.0,576.5 1202.0,475.5"/></g></svg>
<div class="abs" style="left:5.5px;top:3.5px;width:4.5px;height:6px;background:#8a8e98;border-radius:0 0 1px 1px"></div>
<div class="abs" style="left:4px;top:11px;width:7px;height:1px;background:#7a8898"></div>
<div class="abs" style="left:4.5px;top:18.5px;width:6.5px;height:6.5px;background:#7a8a8a"></div>
<div class="abs" style="left:5.5px;top:19.5px;width:4.5px;height:4.5px;background:#1a8098"></div>
<div class="abs" style="left:3.5px;top:26.5px;width:8px;height:1px;background:#7a8898"></div>
<div class="abs" style="left:3.5px;top:28.5px;width:8px;height:1px;background:#7a8898"></div>
<div class="abs" style="left:5.5px;top:34px;width:4.5px;height:6px;background:#8a8a88"></div>
<div class="abs" style="left:5.5px;top:41.5px;width:4px;height:1px;background:#7a8898"></div>
<div class="abs" style="left:5.5px;top:50px;width:4.5px;height:6px;background:#8a8a88"></div>
<div class="abs" style="left:4px;top:57.5px;width:7px;height:1px;background:#7a8898"></div>
<div class="abs" style="left:4px;top:59.5px;width:7px;height:1px;background:#7a8898"></div>
<div class="abs" style="left:52px;top:18.3px;width:88.8px;height:52.3px;background:#8e8c88"></div>
<div class="abs" style="left:89px;top:20.2px;width:15px;height:1px;background:#5a5a58"></div>
<div class="abs" style="left:135px;top:18.8px;width:5px;height:2.5px;background:#7a7876"></div>
<div class="abs" style="left:53.5px;top:19.5px;width:2px;height:2px;background:#3a8a3a"></div>
<div class="abs" style="left:55px;top:24.2px;width:63px;height:0.7px;background:#767472"></div>
<div class="abs" style="left:122px;top:24.2px;width:10px;height:0.7px;background:#767472"></div>
<div class="abs" style="left:60px;top:34.2px;width:13px;height:0.8px;background:#6e6c6a"></div>
<div class="abs" style="left:58.6px;top:38.5px;width:11.399999999999999px;height:0.8px;background:#6e6c6a"></div>
<div class="abs" style="left:58.6px;top:41.6px;width:9.399999999999999px;height:0.8px;background:#6e6c6a"></div>
<div class="abs" style="left:58.6px;top:44.7px;width:7.399999999999999px;height:0.8px;background:#6e6c6a"></div>
<div class="abs" style="left:58.6px;top:47.8px;width:13.399999999999999px;height:0.8px;background:#6e6c6a"></div>
<div class="abs" style="left:90px;top:34.9px;width:16px;height:1px;background:#2a4a8a"></div>
<div class="abs" style="left:90.1px;top:40.3px;width:2.5px;height:9.3px;background:#2a8a2a;border-radius:1px"></div>
<div class="abs" style="left:95px;top:42.6px;width:4.7px;height:4.7px;background:#2a8a2a;border-radius:50%"></div>
<div class="abs" style="left:101px;top:43.6px;width:24px;height:0.9px;background:#5a6a8a"></div>
<div class="abs" style="left:101px;top:47.6px;width:13.5px;height:0.8px;background:#6e6c6a"></div>
<div class="abs" style="left:90px;top:52.8px;width:35px;height:0.8px;background:#6e6c6a"></div>
<div class="abs" style="left:90px;top:55.2px;width:18px;height:0.8px;background:#6e6c6a"></div>
<div class="abs" style="left:121px;top:55.2px;width:4px;height:0.8px;background:#6e6c6a"></div>
<div class="abs" style="left:90px;top:57.9px;width:13px;height:0.8px;background:#6e6c6a"></div>
<div class="abs" style="left:121px;top:57.9px;width:4px;height:0.8px;background:#7a4a4a"></div>
<div class="abs" style="left:58.6px;top:63px;width:7.399999999999999px;height:0.8px;background:#6e6c6a"></div>
<div class="abs" style="left:58.6px;top:65.5px;width:11.399999999999999px;height:0.8px;background:#6e6c6a"></div>
<div class="abs" style="left:58.6px;top:68px;width:9.399999999999999px;height:0.8px;background:#6e6c6a"></div>
<div class="abs" style="left:153px;top:94px;width:43px;height:1px;background:#4a7a98;opacity:.7"></div>
<div class="abs" style="left:153px;top:98px;width:43px;height:1px;background:#4a7a98;opacity:.7"></div>
</div>
<div class="abs" id="d2" style="left:585px;top:608px;width:197px;height:105px;overflow:hidden"><svg class="abs" style="left:0;top:0" width="197" height="105" viewBox="0 0 1366 728" preserveAspectRatio="none">
<defs><linearGradient id="m2g" x1="0" y1="0" x2="1366" y2="0" gradientUnits="userSpaceOnUse"><stop offset="0" stop-color="#1a88dc"/><stop offset=".5" stop-color="#1494e4"/><stop offset="1" stop-color="#10a8f0"/></linearGradient></defs>
<rect width="1366" height="768" fill="url(#m2g)"/>
<polygon points="0,434.5 500,415 -71,768 0,768" fill="#1478cc"/>
<polygon points="1374,282 1366,282 1366,768 928,768" fill="#10acf0"/>
<g fill="#050808"><polygon points="1188.4,-24.2 -108.9,785.8 -103.6,794.2 1193.7,-15.8"/><polygon points="1217.6,-23.0 475.4,787.0 482.1,793.0 1224.3,-17.0"/><polygon points="504.1,410.3 148.5,787.3 154.3,792.7 509.9,415.7"/><polygon points="-9.8,438.9 505.2,419.3 504.8,411.3 -10.2,430.9"/><polygon points="1399.2,245.9 903.7,785.9 912.5,794.1 1408.0,254.1"/><polygon points="1198.0,482.5 1378.0,583.5 1382.0,576.5 1202.0,475.5"/></g></svg>
<div class="abs" style="left:5.5px;top:3.5px;width:4.5px;height:6px;background:#c8ccd8;border-radius:0 0 1px 1px"></div>
<div class="abs" style="left:4px;top:11px;width:7px;height:1px;background:#d8e8f8"></div>
<div class="abs" style="left:4.5px;top:18.5px;width:6.5px;height:6.5px;background:#e8f0f8"></div>
<div class="abs" style="left:5.5px;top:19.5px;width:4.5px;height:4.5px;background:#20a8e0"></div>
<div class="abs" style="left:3.5px;top:26.5px;width:8px;height:1px;background:#d8e8f8"></div>
<div class="abs" style="left:3.5px;top:28.5px;width:8px;height:1px;background:#d8e8f8"></div>
<div class="abs" style="left:5.5px;top:34px;width:4.5px;height:6px;background:#f0f0f0"></div>
<div class="abs" style="left:5.5px;top:41.5px;width:4px;height:1px;background:#d8e8f8"></div>
<div class="abs" style="left:5.5px;top:50px;width:4.5px;height:6px;background:#eeeeee"></div>
<div class="abs" style="left:4px;top:57.5px;width:7px;height:1px;background:#d8e8f8"></div>
<div class="abs" style="left:4px;top:59.5px;width:7px;height:1px;background:#d8e8f8"></div>
<div class="abs" style="left:35.5px;top:12px;width:82.5px;height:63px;background:#f2f2f2;box-shadow:0 0 1px rgba(0,0,0,.3)"></div>
<div class="abs" style="left:36px;top:20px;width:20px;height:48px;background:#fff"></div>
<div class="abs" style="left:56.5px;top:20px;width:60px;height:48px;background:#fff"></div>
<svg class="abs" style="left:37px;top:21px" width="80" height="50"><g stroke="#9a9a9a" stroke-width=".6">
<line x1="1" y1="2" x2="12" y2="2"/><line x1="2" y1="5" x2="15" y2="5"/><line x1="2" y1="8" x2="12" y2="8"/><line x1="2" y1="11" x2="17" y2="11"/>
<line x1="22" y1="3" x2="30" y2="3"/><line x1="45" y1="3" x2="50" y2="3"/>
<line x1="22" y1="6" x2="32" y2="6"/><line x1="45" y1="6" x2="77" y2="6"/>
<line x1="22" y1="9" x2="30" y2="9"/><line x1="45" y1="9" x2="65" y2="9"/>
<line x1="22" y1="12" x2="36" y2="12"/><line x1="45" y1="12" x2="60" y2="12"/>
<line x1="22" y1="15" x2="33" y2="15"/><line x1="45" y1="15" x2="62" y2="15"/>
<line x1="22" y1="18" x2="32" y2="18"/><line x1="45" y1="18" x2="60" y2="18"/>
<line x1="22" y1="21" x2="38" y2="21"/><line x1="45" y1="21" x2="62" y2="21"/>
<line x1="22" y1="24" x2="32" y2="24"/><line x1="45" y1="24" x2="58" y2="24"/>
<line x1="22" y1="27" x2="30" y2="27"/><line x1="45" y1="27" x2="56" y2="27"/>
<line x1="22" y1="30" x2="30" y2="30"/><line x1="45" y1="30" x2="50" y2="30"/>
<line x1="22" y1="33" x2="30" y2="33"/><line x1="45" y1="33" x2="77" y2="33"/>
<line x1="22" y1="36" x2="36" y2="36"/><line x1="45" y1="36" x2="77" y2="36"/>
<line x1="22" y1="39" x2="33" y2="39"/><line x1="45" y1="39" x2="50" y2="39"/>
<line x1="22" y1="42" x2="40" y2="42"/><line x1="45" y1="42" x2="52" y2="42"/>
<line x1="22" y1="45" x2="32" y2="45"/><line x1="45" y1="45" x2="50" y2="45"/>
</g><rect x="76.5" y="2" width="2" height="20" fill="#ccc"/><line x1="1" y1="50" x2="16" y2="50" stroke="#9a9a9a" stroke-width=".6"/><rect x="60" y="47" width="17" height="3" fill="#e8e8e8" stroke="#bbb" stroke-width=".4"/></svg>
<div class="abs" style="left:153px;top:94px;width:43px;height:1px;background:#c8e8f8;opacity:.8"></div>
<div class="abs" style="left:153px;top:98px;width:43px;height:1px;background:#c8e8f8;opacity:.8"></div>
</div>
<div class="abs" id="d3" style="left:792px;top:608px;width:197px;height:105px;background:#000;overflow:hidden">
<svg class="abs" style="left:84px;top:39px" width="28" height="28"><circle cx="14.3" cy="13.8" r="12.1" stroke="#fff" stroke-width="1.8" fill="none"/><rect x="6.5" y="12.3" width="16" height="3" fill="#fff"/><rect x="13" y="6" width="3" height="16" fill="#fff"/></svg>
</div>

<div id="taskbar">
<svg class="abs" style="left:0;top:0" width="1366" height="40">
<defs><linearGradient id="tbg" x1="0" y1="0" x2="1366" y2="0" gradientUnits="userSpaceOnUse"><stop offset="0" stop-color="#2a7ebf"/><stop offset="0.5" stop-color="#2a8cc6"/><stop offset="1" stop-color="#2a98c9"/></linearGradient></defs>
<rect width="1366" height="40" fill="url(#tbg)"/>

<g fill="#2a5a6a">
<polygon points="206.5,0 218.5,0 180.7,40 170.5,40"/>
<polygon points="524,0 536,0 509,40 492.5,40"/>
<polygon points="953,0 975.5,0 940.5,40 918.3,40"/>
</g>
</svg>
<!-- start -->
<svg class="abs" style="left:11.5px;top:6.3px" width="28" height="27"><g fill="#fff"><polygon points="0,3.9 12.6,2.2 12.6,12.6 0,12.6"/><polygon points="14,2 27.2,0.2 27.2,12.6 14,12.6"/><polygon points="0,14 12.6,14 12.6,24.2 0,22.6"/><polygon points="14,14 27.2,14 27.2,26.2 14,24.4"/></g></svg>
<!-- search -->
<svg class="abs" style="left:69px;top:10px" width="24" height="22"><circle cx="15" cy="8" r="6" stroke="#fff" stroke-width="2.2" fill="none"/><line x1="10.5" y1="12.5" x2="3" y2="20" stroke="#fff" stroke-width="3.2" stroke-linecap="round"/></svg>
<!-- task view -->
<svg class="abs" style="left:125px;top:11px" width="25" height="19"><rect x="4.5" y="0.5" width="18" height="12" stroke="#fff" stroke-width="1.6" fill="none"/><rect x="1" y="4" width="18" height="14" fill="#fff"/></svg>
<!-- IE -->
<svg class="abs" style="left:181px;top:3px" width="33" height="33">
<defs><radialGradient id="ieg" cx=".4" cy=".35" r=".75"><stop offset="0" stop-color="#c8f6ff"/><stop offset=".55" stop-color="#5ccff6"/><stop offset="1" stop-color="#2a8ad8"/></radialGradient></defs>
<circle cx="17.8" cy="17.3" r="12.9" fill="url(#ieg)"/>
<path d="M11.3 14.6 Q11.8 8.9 17 8.9 Q22.7 8.9 22.7 14.6 Z" fill="#1f5f96"/>
<path d="M11.3 18.6 L31 18.6 L31 21.4 Q26 25 19.5 24.6 Q12.3 24.2 11.3 18.6 Z" fill="#1f5f96"/>
<path d="M4.5 29.5 Q0.5 25.5 5 18 Q11.5 7 21.5 2.8 Q29 0.3 29.6 7" stroke="#f5b800" stroke-width="2.3" fill="none" stroke-linecap="round"/>
<path d="M5.5 21 Q9 12 16 6.5" stroke="#ffe060" stroke-width=".8" fill="none"/>
</svg>
<!-- explorer btn -->
<div class="abs" style="left:230px;top:1px;width:58px;height:38px;background:rgba(140,200,240,.3);border:1px solid rgba(170,215,245,.7)"></div>
<svg class="abs" style="left:243px;top:8px" width="31" height="26"><path d="M1 5 L14 5 L17 1 L30 1 L30 25 L1 25 Z" fill="#f6c57b"/><path d="M15.5 5 L18 2 L28.5 2 L29.5 5 Z" fill="#fff"/><rect x="3" y="12.5" width="24.7" height="12.6" fill="#4a7dc0" rx="2"/><rect x="11" y="20" width="9" height="5" fill="#f2c27a"/></svg>
<!-- store -->
<div class="abs" style="left:306px;top:5px;width:30px;height:30px;background:#078c0a"></div>
<svg class="abs" style="left:309px;top:7px" width="24" height="26"><path d="M8 8 Q8 2 12 2 Q16 2 16 8" stroke="#fff" stroke-width="1.3" fill="none"/><path d="M1 6 L22 9 L22 26 L1 22 Z" fill="#fff"/><g fill="#0a8f0a"><polygon points="5,11 10.5,11.7 10.5,16 5,15.6"/><polygon points="11.5,11.8 18,12.6 18,16.3 11.5,16.1"/><polygon points="5,16.6 10.5,17 10.5,21 5,20.2"/><polygon points="11.5,17 18,17.3 18,21.8 11.5,21.2"/></g></svg>
<!-- control panel -->
<svg class="abs" style="left:366px;top:8px" width="34" height="30"><rect x="1.5" y="0.5" width="31" height="21" fill="#4a9ad8" stroke="#a8d4f0" stroke-width="1"/><circle cx="9.5" cy="7.5" r="4" stroke="#fff" stroke-width="1.2" fill="none"/><path d="M9.5 7.5 L9.5 3 A4.5 4.5 0 0 1 14 7.5 Z" fill="#f5a020"/><rect x="17" y="4" width="11" height="3" fill="#1a6ab8" stroke="#e8f4ff" stroke-width=".8"/><rect x="17" y="10" width="11" height="3" fill="#1a6ab8" stroke="#e8f4ff" stroke-width=".8"/><circle cx="7" cy="16" r="1.2" fill="#8ad8ff"/><circle cx="10.5" cy="16" r="1.2" fill="#f5a020"/><ellipse cx="16" cy="25" rx="6" ry="4" fill="#d8dcdc"/></svg>
<div class="abs" style="left:354px;top:36px;width:58px;height:6px;border:1px solid rgba(170,215,245,.7);background:rgba(140,200,240,.2)"></div>
<!-- weather btn -->
<div class="abs" style="left:416px;top:1px;width:58px;height:38px;background:rgba(140,200,240,.3);border:1px solid rgba(170,215,245,.7)"></div>
<div class="abs" style="left:430px;top:5px;width:30px;height:30px;background:#2f7ae6"></div>
<svg class="abs" style="left:430px;top:5px" width="30" height="30"><circle cx="15" cy="15" r="6.3" fill="#fff"/><g stroke="#fff" stroke-width="1.4"><line x1="15" y1="3" x2="15" y2="6.5"/><line x1="15" y1="23.5" x2="15" y2="27"/><line x1="3" y1="15" x2="6.5" y2="15"/><line x1="23.5" y1="15" x2="27" y2="15"/><line x1="6.5" y1="6.5" x2="9" y2="9"/><line x1="21" y1="21" x2="23.5" y2="23.5"/><line x1="23.5" y1="6.5" x2="21" y2="9"/><line x1="6.5" y1="23.5" x2="9" y2="21"/><line x1="10.4" y1="4" x2="11.3" y2="6.3"/><line x1="19.6" y1="4" x2="18.7" y2="6.3"/><line x1="10.4" y1="26" x2="11.3" y2="23.7"/><line x1="19.6" y1="26" x2="18.7" y2="23.7"/><line x1="4" y1="10.4" x2="6.3" y2="11.3"/><line x1="4" y1="19.6" x2="6.3" y2="18.7"/><line x1="26" y1="10.4" x2="23.7" y2="11.3"/><line x1="26" y1="19.6" x2="23.7" y2="18.7"/></g></svg>
<!-- reading btn -->
<div class="abs" style="left:478px;top:1px;width:58px;height:38px;background:rgba(140,200,240,.3);border:1px solid rgba(170,215,245,.7)"></div>
<div class="abs" style="left:492px;top:5px;width:30px;height:30px;background:#b8173a"></div>
<svg class="abs" style="left:492px;top:5px" width="30" height="30"><g stroke="#fff" stroke-width="1.5" fill="none"><path d="M8 8.4 A1.8 1.8 0 1 0 7 11.5 L23 11.5"/><line x1="10" y1="8.4" x2="24.6" y2="8.4"/><line x1="9" y1="14.8" x2="25" y2="14.8"/><line x1="7.5" y1="17.9" x2="24" y2="17.9"/><line x1="9" y1="21.2" x2="25" y2="21.2"/></g></svg>
<!-- sysinfo btn -->
<div class="abs" style="left:540px;top:1px;width:58px;height:38px;background:rgba(140,200,240,.3);border:1px solid rgba(170,215,245,.7)"></div>
<svg class="abs" style="left:553px;top:4px" width="31" height="32">
<defs><linearGradient id="scr" x1="0" y1="0" x2="1" y2="1"><stop offset="0" stop-color="#0a1aa8"/><stop offset=".6" stop-color="#2a58d8"/><stop offset="1" stop-color="#c8d8f8"/></linearGradient></defs>
<ellipse cx="15" cy="27" rx="7.5" ry="3.5" fill="#d8dcdc"/><rect x="13" y="21" width="5" height="5" fill="#c8cccc"/>
<polygon points="3,1.5 29,4 27,23 1,19.5" fill="#e6e6e0"/><polygon points="5,3.5 27,5.8 25.5,20.5 3,17.5" fill="url(#scr)"/>
<circle cx="15" cy="12" r="6" fill="#4a6ae0" stroke="#c8d8ff" stroke-width=".9"/><rect x="14.2" y="10.5" width="1.8" height="5.5" fill="#fff"/><circle cx="15.1" cy="8.6" r="1" fill="#fff"/>
</svg>
<!-- tray -->
<svg class="abs" style="left:1156px;top:17px" width="11" height="8"><polygon points="1.5,6.5 5.5,1.5 9.5,6.5" fill="#fff" stroke="#2a4a60" stroke-width=".5"/></svg>
<svg class="abs" style="left:1179px;top:12px" width="19" height="18"><g stroke="#1c3c52" stroke-width=".6"><rect x="1.5" y="1" width="2" height="16" fill="#fff"/><path d="M3.5 2 L9 2 Q10.5 3 10.5 5 L16.5 5 Q16.5 8 14.5 9.5 L10 9.5 Q9.5 8.5 8.5 8.5 L3.5 8.5 Z" fill="#fff"/></g></svg>
<svg class="abs" style="left:1203px;top:12px" width="18" height="17"><g stroke="#fff" stroke-width="1.5" fill="none"><rect x="2.5" y="2" width="3.5" height="5.5" rx="1.6"/><line x1="4.3" y1="7.5" x2="4.3" y2="15"/><rect x="7.5" y="3.5" width="8.5" height="7.5"/><line x1="11" y1="11" x2="11" y2="14"/><line x1="7" y1="14.5" x2="14" y2="14.5"/></g></svg>
<svg class="abs" style="left:1228px;top:12px" width="18" height="18"><polygon points="1.2,6 4,6 7.3,2 7.3,16 4,12 1.2,12" fill="#fff" stroke="#1c3c52" stroke-width=".6"/><path d="M9.5 7.5 Q10.5 9 9.5 10.5" stroke="#fff" stroke-width="1.1" fill="none"/><path d="M11.5 5 Q14 9 11.5 13" stroke="#fff" stroke-width="1.1" fill="none"/><path d="M13.5 3 Q17 9 13.5 15" stroke="#fff" stroke-width="1.1" fill="none"/></svg>
<div class="abs" style="left:1258px;top:14px;font-size:12px;line-height:14px;color:#fff;transform:scaleX(.86);transform-origin:left">ENG</div>
<div class="abs" style="left:1301px;top:6px;font-size:11.5px;line-height:14px;color:#fff;white-space:nowrap;transform:scaleX(.99);transform-origin:left">8:55 AM</div>
<div class="abs" style="left:1298px;top:22px;font-size:11.5px;line-height:14px;color:#fff;white-space:nowrap;transform:scaleX(.99);transform-origin:left">10/6/2014</div>
</div>
</body></html>
